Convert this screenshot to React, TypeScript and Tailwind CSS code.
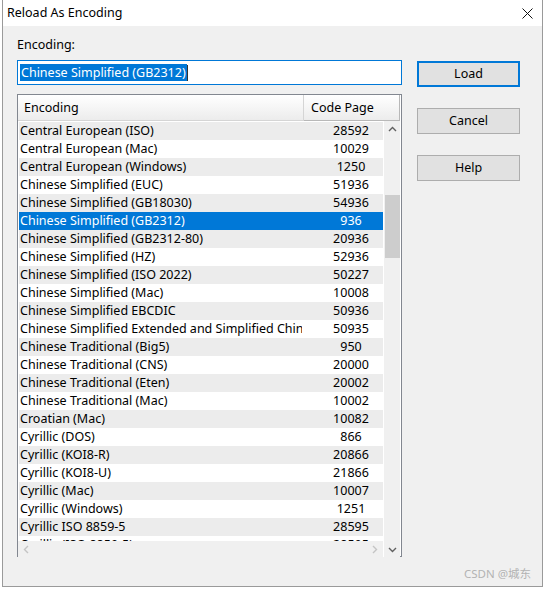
import React from "react";

const ROWS: [string, string][] = [
  ["Central European (ISO)", "28592"],
  ["Central European (Mac)", "10029"],
  ["Central European (Windows)", "1250"],
  ["Chinese Simplified (EUC)", "51936"],
  ["Chinese Simplified (GB18030)", "54936"],
  ["Chinese Simplified (GB2312)", "936"],
  ["Chinese Simplified (GB2312-80)", "20936"],
  ["Chinese Simplified (HZ)", "52936"],
  ["Chinese Simplified (ISO 2022)", "50227"],
  ["Chinese Simplified (Mac)", "10008"],
  ["Chinese Simplified EBCDIC", "50936"],
  ["Chinese Simplified Extended and Simplified Chinese", "50935"],
  ["Chinese Traditional (Big5)", "950"],
  ["Chinese Traditional (CNS)", "20000"],
  ["Chinese Traditional (Eten)", "20002"],
  ["Chinese Traditional (Mac)", "10002"],
  ["Croatian (Mac)", "10082"],
  ["Cyrillic (DOS)", "866"],
  ["Cyrillic (KOI8-R)", "20866"],
  ["Cyrillic (KOI8-U)", "21866"],
  ["Cyrillic (Mac)", "10007"],
  ["Cyrillic (Windows)", "1251"],
  ["Cyrillic ISO 8859-5", "28595"],
  ["Cyrillic (ISO 8859-5)", "28595"],
];

const SELECTED = 5;

function Chevron({ dir, color }: { dir: "up" | "down" | "left" | "right"; color: string }) {
  const d = {
    up: "M1 6 L4.5 2.5 L8 6",
    down: "M1 3 L4.5 6.5 L8 3",
    left: "M6 1 L2.5 4.5 L6 8",
    right: "M3 1 L6.5 4.5 L3 8",
  }[dir];
  return (
    <svg width="9" height="9" viewBox="0 0 9 9">
      <path d={d} fill="none" stroke={color} strokeWidth="1.4" />
    </svg>
  );
}

function Button({ label, primary }: { label: string; primary?: boolean }) {
  return (
    <div
      className={
        "flex h-[26px] w-[103px] items-center justify-center bg-[#e1e1e1] text-[12.5px] text-black " +
        (primary ? "border-2 border-[#0078d7]" : "border border-[#adadad]")
      }
    >
      {label}
    </div>
  );
}

export default function App() {
  return (
    <div
      className="h-[590px] w-[545px] overflow-hidden bg-white"
      style={{ fontFamily: '"Noto Sans", "Noto Sans CJK SC", sans-serif' }}
    >
      <div className="ml-[2px] flex h-[587px] w-[541px] flex-col border-x border-b border-[#9a9a9a]">
        {/* title bar */}
        <div className="flex h-[26px] items-center justify-between bg-white pl-[4px] pr-[9px] text-[12.5px] text-black">
          <span>Reload As Encoding</span>
          <svg width="11" height="11" viewBox="0 0 11 11">
            <path d="M0.5 0.5 L10.5 10.5 M10.5 0.5 L0.5 10.5" stroke="#111" strokeWidth="1" />
          </svg>
        </div>

        {/* body */}
        <div className="relative flex flex-1 gap-[15px] bg-[#f0f0f0] pl-[14px]">
          <div className="flex w-[385px] flex-col pt-[11px]">
            <div className="h-[16px] text-[12.5px] leading-[16px] text-black">Encoding:</div>
            <div className="mt-[7px] flex h-[25px] items-center border border-[#0078d7] bg-white pl-[2px]">
              <span className="bg-[#0078d7] px-[1px] text-[12.5px] leading-[17px] text-white">
                Chinese Simplified (GB2312)
              </span>
              <span className="h-[16px] w-[1px] bg-[#333]" />
            </div>

            {/* list */}
            <div className="mt-[9px] flex h-[463px] w-[385px] flex-col border border-[#828790] bg-white">
              <div className="flex h-[26px] shrink-0">
                <div className="flex w-[286px] items-center border-b border-r border-[#d5d5d5] bg-gradient-to-b from-[#ffffff] to-[#ececec] pl-[6px] pt-[2px] text-[12.5px] text-black">
                  Encoding
                </div>
                <div className="flex w-[96px] items-center border-b border-r border-[#b8b8b8] bg-gradient-to-b from-[#ffffff] to-[#ececec] pl-[7px] pt-[2px] text-[12.5px] text-black">
                  Code Page
                </div>
              </div>
              <div className="flex flex-1">
                <div className="flex w-[365px] flex-col">
                  <div className="h-[420px] overflow-hidden pl-[1px] pt-[1px]">
                    {ROWS.map(([name, cp], i) => {
                      const sel = i === SELECTED;
                      const bg = sel ? "bg-[#0078d7] text-white" : i % 2 === 0 ? "bg-[#ececec] text-black" : "bg-white text-black";
                      return (
                        <div key={i} className={"flex h-[18px] w-[364px] items-center overflow-hidden pt-[1px] text-[12.5px] " + bg}>
                          <div className="w-[283px] shrink-0 overflow-hidden whitespace-nowrap pl-[1px]">{name}</div>
                          <div className="w-[98px] shrink-0 text-center">{cp}</div>
                        </div>
                      );
                    })}
                  </div>
                  <div className="flex h-[16px] items-center justify-between bg-[#f0f0f0] px-[4px]">
                    <Chevron dir="left" color="#c4c4c4" />
                    <Chevron dir="right" color="#c4c4c4" />
                  </div>
                </div>
                <div className="flex w-[17px] flex-col items-center border-l border-white bg-[#f0f0f0]">
                  <div className="flex h-[17px] w-full items-center justify-center">
                    <Chevron dir="up" color="#606060" />
                  </div>
                  <div className="mt-[57px] h-[63px] w-[15px] bg-[#cdcdcd]" />
                  <div className="flex-1" />
                  <div className="flex h-[16px] w-full items-center justify-center">
                    <Chevron dir="down" color="#606060" />
                  </div>
                </div>
              </div>
            </div>
          </div>

          <div className="flex flex-col gap-[21px] pt-[35px]">
            <Button label="Load" primary />
            <Button label="Cancel" />
            <Button label="Help" />
          </div>

          <div className="absolute bottom-[4px] right-[11px] text-[11.5px] text-[#b3b3b3]">
            CSDN @城东
          </div>
        </div>
      </div>
    </div>
  );
}
